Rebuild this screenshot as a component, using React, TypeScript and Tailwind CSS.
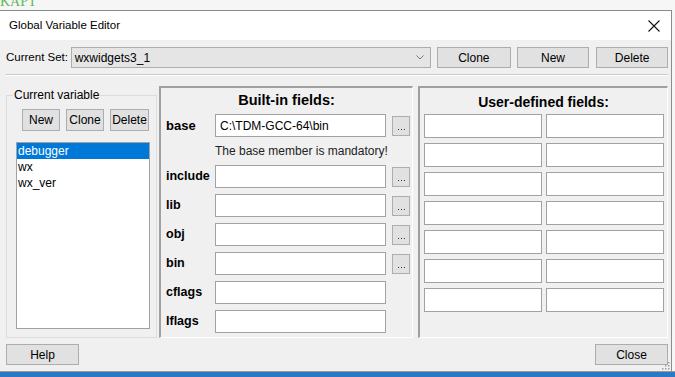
import React from 'react';

const Btn: React.FC<{ label: string; className?: string }> = ({ label, className = '' }) => (
  <div
    className={`flex items-center justify-center bg-[#e1e1e1] border border-[#adadad] text-[12px] text-black ${className}`}
  >
    {label}
  </div>
);

const Field: React.FC<{ value?: string; className?: string }> = ({ value = '', className = '' }) => (
  <div className={`bg-white border border-[#a2a2a2] flex items-center pl-[4px] text-[12px] text-black ${className}`}>
    {value}
  </div>
);

const Dots: React.FC = () => (
  <div className="ml-[6px] w-[18px] h-[20px] bg-[#e1e1e1] border border-[#adadad] flex items-end justify-center pb-[5px]">
    <svg width="7" height="1" viewBox="0 0 7 1">
      <rect x="0" y="0" width="1" height="1" fill="#333" />
      <rect x="3" y="0" width="1" height="1" fill="#333" />
      <rect x="6" y="0" width="1" height="1" fill="#333" />
    </svg>
  </div>
);

const builtIn = [
  { name: 'include', browse: true },
  { name: 'lib', browse: true },
  { name: 'obj', browse: true },
  { name: 'bin', browse: true },
  { name: 'cflags', browse: false },
  { name: 'lflags', browse: false },
];

const variables = ['debugger', 'wx', 'wx_ver'];

export default function App() {
  return (
    <div className="w-[675px] h-[377px] overflow-hidden bg-[#f6f6f6] flex flex-col font-['Liberation_Sans',Arial,sans-serif]">
      {/* strip behind the dialog */}
      <div className="h-[10px] overflow-hidden shrink-0">
        <div className="-mt-[5px] text-[14px] leading-[14px] text-[#5cb85c] font-['Liberation_Serif',serif]">KAPT</div>
      </div>

      {/* dialog window */}
      <div className="relative w-[672px] h-[361px] shrink-0 border-t border-r border-[#8c8c8c] bg-[#f0f0f0] flex flex-col">
        {/* title bar */}
        <div className="h-[29px] bg-white flex items-center justify-between pl-[9px] pr-[11px] shrink-0">
          <span className="text-[11.5px] text-black">Global Variable Editor</span>
          <svg width="12" height="12" viewBox="0 0 12 12">
            <path d="M0.5 0.5 L11.5 11.5 M11.5 0.5 L0.5 11.5" stroke="#111" strokeWidth="1.1" />
          </svg>
        </div>

        <div className="flex-1 flex flex-col pl-[6px] pr-[3px] pt-[7px]">
          {/* current set row */}
          <div className="flex items-center h-[21px]">
            <span className="w-[65px] text-[11.5px] text-black">Current Set:</span>
            <div className="w-[362px] h-[21px] bg-[#e5e5e5] border border-[#adadad] flex items-center justify-between pl-[3px] pr-[6px] text-[12px] text-black">
              <span>wxwidgets3_1</span>
              <svg width="8" height="5" viewBox="0 0 8 5">
                <path d="M0.5 0.5 L4 4 L7.5 0.5" fill="none" stroke="#777" strokeWidth="1" />
              </svg>
            </div>
            <Btn label="Clone" className="ml-[6px] w-[74px] h-[21px]" />
            <Btn label="New" className="ml-[6px] w-[73px] h-[21px]" />
            <Btn label="Delete" className="ml-[7px] w-[72px] h-[21px]" />
          </div>

          {/* separator */}
          <div className="mt-[6px] h-[2px] border-t border-[#c9c9c9] border-b border-b-white" />

          {/* main area */}
          <div className="mt-[10px] h-[252px] flex">
            {/* current variable group */}
            <div className="w-[151px] pt-[9px] flex flex-col">
              <div className="relative flex-1 border border-[#dcdcdc] flex flex-col">
                <span className="absolute -top-[8px] left-[6px] bg-[#f0f0f0] px-[1px] text-[12px] leading-[14px] text-black">
                  Current variable
                </span>
                <div className="flex gap-[6px] pl-[15px] pt-[13px]">
                  <Btn label="New" className="w-[38px] h-[22px]" />
                  <Btn label="Clone" className="w-[38px] h-[22px]" />
                  <Btn label="Delete" className="w-[39px] h-[22px]" />
                </div>
                <div className="ml-[9px] mt-[11px] w-[134px] h-[187px] bg-white border border-[#a2a2a2] flex flex-col">
                  {variables.map((v, i) => (
                    <div
                      key={v}
                      className={`h-[16px] flex items-center pl-[1px] text-[12px] ${
                        i === 0 ? 'bg-[#0078d7] text-white' : 'text-black'
                      }`}
                    >
                      {v}
                    </div>
                  ))}
                </div>
              </div>
            </div>

            {/* built-in fields */}
            <div className="ml-[2px] w-[254px] border-l-2 border-t-2 border-l-[#a0a0a0] border-t-[#a0a0a0] border-r border-b border-r-white border-b-white flex flex-col pt-[4px]">
              <div className="h-[18px] flex items-center justify-center text-[14.5px] font-bold text-black">Built-in fields:</div>
              <div className="mt-[4px] flex items-center h-[23px]">
                <span className="w-[54px] pl-[5px] text-[13px] font-bold text-black">base</span>
                <Field value="C:\TDM-GCC-64\bin" className="w-[171px] h-[23px]" />
                <Dots />
              </div>
              <div className="h-[28px] flex items-center pl-[54px] text-[12px] text-[#222]">
                The base member is mandatory!
              </div>
              <div className="flex flex-col gap-[6px]">
                {builtIn.map((f) => (
                  <div key={f.name} className="flex items-center h-[23px]">
                    <span className="w-[54px] pl-[5px] text-[12.5px] font-bold text-black">{f.name}</span>
                    <Field className="w-[171px] h-[23px]" />
                    {f.browse && <Dots />}
                  </div>
                ))}
              </div>
            </div>

            {/* user-defined fields */}
            <div className="ml-[5px] w-[250px] border-l-2 border-t-2 border-l-[#a0a0a0] border-t-[#a0a0a0] border-r border-b border-r-white border-b-white flex flex-col pt-[5px] pl-[4px]">
              <div className="h-[18px] flex items-center justify-center text-[14px] font-bold text-black pr-[4px]">
                User-defined fields:
              </div>
              <div className="mt-[3px] grid grid-cols-[118px_118px] gap-x-[4px] gap-y-[5px]">
                {Array.from({ length: 14 }).map((_, i) => (
                  <Field key={i} className="h-[24px]" />
                ))}
              </div>
            </div>
          </div>

          {/* footer */}
          <div className="mt-[6px] flex justify-between">
            <Btn label="Help" className="w-[73px] h-[21px]" />
            <Btn label="Close" className="w-[73px] h-[21px]" />
          </div>
        </div>

        {/* resize grip */}
        <svg className="absolute right-[1px] bottom-[1px]" width="9" height="9" viewBox="0 0 9 9">
          {[
            [7, 1],
            [4, 4],
            [7, 4],
            [1, 7],
            [4, 7],
            [7, 7],
          ].map(([x, y], i) => (
            <rect key={i} x={x} y={y} width="1.5" height="1.5" fill="#a0a0a0" />
          ))}
        </svg>
      </div>

      {/* taskbar edge */}
      <div className="flex-1 border-t border-[#9a9a9a] bg-[#2b79c2]" />
    </div>
  );
}
